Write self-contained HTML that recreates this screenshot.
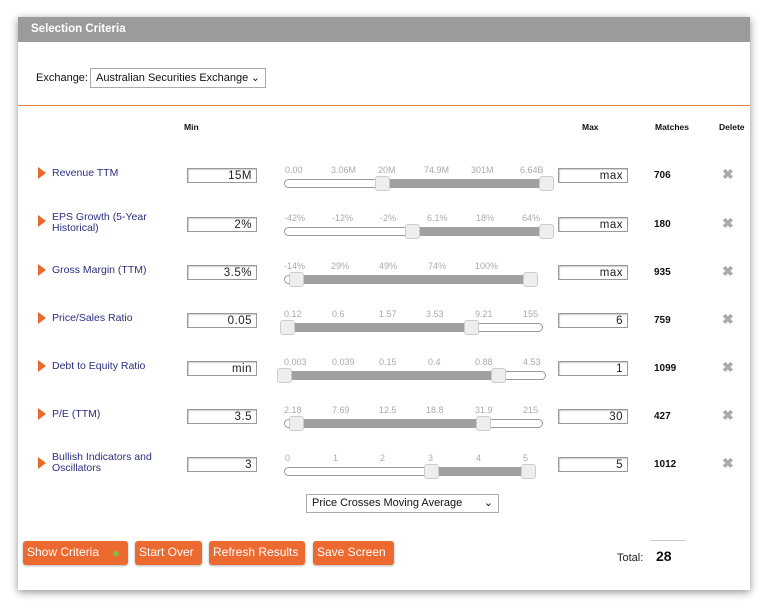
<!DOCTYPE html>
<html><head><meta charset="utf-8"><style>
body{margin:0;width:768px;height:608px;background:#fff;position:relative;overflow:hidden;font-family:"Liberation Sans",sans-serif}
.panel{position:absolute;left:18px;top:17px;width:732px;height:573px;background:#fff;box-shadow:0 2px 8px rgba(0,0,0,.45)}
.hdr{position:absolute;left:18px;top:17px;width:732px;height:25px;background:#9b9b9b;color:#fff;font-weight:bold;font-size:11.5px;line-height:24px;text-indent:13px}
.a{position:absolute;white-space:nowrap}
.sel{position:absolute;border:1px solid #aaa;background:#fff;font-size:12px;color:#111;box-sizing:border-box;padding-left:5px;white-space:nowrap;overflow:hidden}
.inp{position:absolute;width:70px;height:15px;border:1px solid #999;box-shadow:inset 1px 1px 1px #ccc;box-sizing:border-box;text-align:right;padding-right:4px;font-family:"Liberation Sans",sans-serif;font-size:11.5px;line-height:14px;color:#222;letter-spacing:.5px}
.name{position:absolute;left:52px;font-size:10.5px;color:#2b2f7e;line-height:11px}
.tri{position:absolute;left:38px;width:0;height:0;border-left:8px solid #e8692a;border-top:6px solid transparent;border-bottom:6px solid transparent}
.lbl{position:absolute;font-size:9px;color:#aaa}
.trk{position:absolute;height:9px;border:1px solid #999;border-radius:5px;background:#fff;box-sizing:border-box}
.fill{position:absolute;height:9px;background:#a0a0a0}
.th{position:absolute;width:15px;height:15px;background:#eee;border:1px solid #ccc;border-radius:3px;box-sizing:border-box;margin-left:-7px}
.mt{position:absolute;left:654px;font-size:10px;font-weight:bold;color:#111}
.x{position:absolute;left:722px;font-size:14px;color:#aaa;font-weight:bold}
.btn{position:absolute;top:541px;height:24px;background:#ec6a2f;border-radius:3px;color:#fff;font-size:12px;line-height:22px;padding:0 4px;box-sizing:border-box;box-shadow:0 1px 2px rgba(0,0,0,.3);white-space:nowrap}
.col{position:absolute;top:122px;font-size:8.5px;font-weight:bold;color:#111}
</style></head><body>
<div class="panel"></div>
<div class="hdr">Selection Criteria</div>
<div class="a" style="left:36px;top:72px;font-size:11px;color:#111">Exchange:</div>
<div class="sel" style="left:90px;top:68px;width:176px;height:20px;line-height:18px;font-size:11px">Australian Securities Exchange<span style="position:absolute;right:5px;top:0;background:#fff;padding-left:2px">&#8964;</span></div>
<div class="a" style="left:18px;top:105px;width:732px;height:1px;background:#e0843f"></div>
<div class="col" style="left:184px">Min</div>
<div class="col" style="left:582px">Max</div>
<div class="col" style="left:655px">Matches</div>
<div class="col" style="left:719px">Delete</div>

<div class="tri" style="top:167px"></div><div class="name" style="top:168px">Revenue TTM</div>
<div class="inp" style="left:187px;top:168px">15M</div>
<div class="lbl" style="left:285px;top:165px">0.00</div><div class="lbl" style="left:331px;top:165px">3.06M</div><div class="lbl" style="left:378px;top:165px">20M</div><div class="lbl" style="left:424px;top:165px">74.9M</div><div class="lbl" style="left:471px;top:165px">301M</div><div class="lbl" style="left:520px;top:165px">6.64B</div>
<div class="trk" style="left:284px;top:179px;width:268px"></div><div class="fill" style="left:382px;top:179px;width:164px"></div>
<div class="th" style="left:382px;top:176px"></div><div class="th" style="left:546px;top:176px"></div>
<div class="inp" style="left:558px;top:168px">max</div>
<div class="mt" style="top:170px">706</div><div class="x" style="top:166px">✖</div>

<div class="tri" style="top:215px"></div><div class="name" style="top:212px">EPS Growth (5-Year<br>Historical)</div>
<div class="inp" style="left:187px;top:217px">2%</div>
<div class="lbl" style="left:284px;top:213px">-42%</div><div class="lbl" style="left:332px;top:213px">-12%</div><div class="lbl" style="left:380px;top:213px">-2%</div><div class="lbl" style="left:427px;top:213px">6.1%</div><div class="lbl" style="left:476px;top:213px">18%</div><div class="lbl" style="left:522px;top:213px">64%</div>
<div class="trk" style="left:284px;top:227px;width:268px"></div><div class="fill" style="left:412px;top:227px;width:134px"></div>
<div class="th" style="left:412px;top:224px"></div><div class="th" style="left:546px;top:224px"></div>
<div class="inp" style="left:558px;top:217px">max</div>
<div class="mt" style="top:219px">180</div><div class="x" style="top:215px">✖</div>

<div class="tri" style="top:264px"></div><div class="name" style="top:265px">Gross Margin (TTM)</div>
<div class="inp" style="left:187px;top:265px">3.5%</div>
<div class="lbl" style="left:284px;top:261px">-14%</div><div class="lbl" style="left:331px;top:261px">29%</div><div class="lbl" style="left:379px;top:261px">49%</div><div class="lbl" style="left:428px;top:261px">74%</div><div class="lbl" style="left:475px;top:261px">100%</div>
<div class="trk" style="left:284px;top:275px;width:253px"></div><div class="fill" style="left:296px;top:275px;width:234px"></div>
<div class="th" style="left:296px;top:272px"></div><div class="th" style="left:530px;top:272px"></div>
<div class="inp" style="left:558px;top:265px">max</div>
<div class="mt" style="top:267px">935</div><div class="x" style="top:263px">✖</div>

<div class="tri" style="top:312px"></div><div class="name" style="top:313px">Price/Sales Ratio</div>
<div class="inp" style="left:187px;top:313px">0.05</div>
<div class="lbl" style="left:284px;top:309px">0.12</div><div class="lbl" style="left:332px;top:309px">0.6</div><div class="lbl" style="left:379px;top:309px">1.57</div><div class="lbl" style="left:426px;top:309px">3.53</div><div class="lbl" style="left:475px;top:309px">9.21</div><div class="lbl" style="left:523px;top:309px">155</div>
<div class="trk" style="left:284px;top:323px;width:259px"></div><div class="fill" style="left:286px;top:323px;width:185px"></div>
<div class="th" style="left:287px;top:320px"></div><div class="th" style="left:471px;top:320px"></div>
<div class="inp" style="left:558px;top:313px">6</div>
<div class="mt" style="top:315px">759</div><div class="x" style="top:311px">✖</div>

<div class="tri" style="top:360px"></div><div class="name" style="top:361px">Debt to Equity Ratio</div>
<div class="inp" style="left:187px;top:361px">min</div>
<div class="lbl" style="left:284px;top:357px">0.003</div><div class="lbl" style="left:332px;top:357px">0.039</div><div class="lbl" style="left:379px;top:357px">0.15</div><div class="lbl" style="left:428px;top:357px">0.4</div><div class="lbl" style="left:475px;top:357px">0.88</div><div class="lbl" style="left:523px;top:357px">4.53</div>
<div class="trk" style="left:284px;top:371px;width:262px"></div><div class="fill" style="left:284px;top:371px;width:214px"></div>
<div class="th" style="left:284px;top:368px"></div><div class="th" style="left:498px;top:368px"></div>
<div class="inp" style="left:558px;top:361px">1</div>
<div class="mt" style="top:363px">1099</div><div class="x" style="top:359px">✖</div>

<div class="tri" style="top:408px"></div><div class="name" style="top:409px">P/E (TTM)</div>
<div class="inp" style="left:187px;top:409px">3.5</div>
<div class="lbl" style="left:284px;top:405px">2.18</div><div class="lbl" style="left:332px;top:405px">7.69</div><div class="lbl" style="left:379px;top:405px">12.5</div><div class="lbl" style="left:426px;top:405px">18.8</div><div class="lbl" style="left:475px;top:405px">31.9</div><div class="lbl" style="left:523px;top:405px">215</div>
<div class="trk" style="left:284px;top:419px;width:259px"></div><div class="fill" style="left:296px;top:419px;width:187px"></div>
<div class="th" style="left:296px;top:416px"></div><div class="th" style="left:483px;top:416px"></div>
<div class="inp" style="left:558px;top:409px">30</div>
<div class="mt" style="top:411px">427</div><div class="x" style="top:407px">✖</div>

<div class="tri" style="top:457px"></div><div class="name" style="top:452px">Bullish Indicators and<br>Oscillators</div>
<div class="inp" style="left:187px;top:457px">3</div>
<div class="lbl" style="left:285px;top:453px">0</div><div class="lbl" style="left:333px;top:453px">1</div><div class="lbl" style="left:380px;top:453px">2</div><div class="lbl" style="left:428px;top:453px">3</div><div class="lbl" style="left:476px;top:453px">4</div><div class="lbl" style="left:523px;top:453px">5</div>
<div class="trk" style="left:284px;top:467px;width:251px"></div><div class="fill" style="left:431px;top:467px;width:97px"></div>
<div class="th" style="left:431px;top:464px"></div><div class="th" style="left:528px;top:464px"></div>
<div class="inp" style="left:558px;top:457px">5</div>
<div class="mt" style="top:459px">1012</div><div class="x" style="top:455px">✖</div>

<div class="sel" style="left:306px;top:494px;width:193px;height:19px;line-height:17px;font-size:11px">Price Crosses Moving Average<span style="position:absolute;right:5px">&#8964;</span></div>

<div class="btn" style="left:23px;width:105px">Show Criteria <span style="color:#7cc242;font-size:9px;margin-left:10px">◆</span></div>
<div class="btn" style="left:135px;width:67px">Start Over</div>
<div class="btn" style="left:209px;width:96px">Refresh Results</div>
<div class="btn" style="left:313px;width:81px">Save Screen</div>
<div class="a" style="left:650px;top:540px;width:36px;height:1px;background:#ccc"></div>
<div class="a" style="left:617px;top:552px;font-size:11px;color:#222">Total:</div>
<div class="a" style="left:656px;top:548px;font-size:14px;font-weight:bold;color:#111">28</div>
</body></html>
